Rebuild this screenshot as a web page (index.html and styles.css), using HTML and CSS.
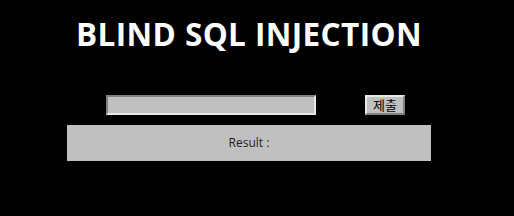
FILE: index.html
```html
<!DOCTYPE html>
<html lang="ko">
<head>
<meta charset="utf-8">
<title>Blind SQL Injection</title>
<link rel="stylesheet" href="styles.css">
</head>
<body>
<div class="page">
  <h1 class="title">BLIND SQL INJECTION</h1>
  <form class="row">
    <input class="field" type="text" name="q">
    <button class="submit" type="button">제출</button>
  </form>
  <div class="result">Result :</div>
</div>
</body>
</html>
```

FILE: styles.css
```css
html, body {
  margin: 0;
  padding: 0;
  background: #000;
}
.page {
  width: 498px;
  display: flex;
  flex-direction: column;
  font-family: "Open Sans", "Noto Sans CJK KR", sans-serif;
}
.title {
  margin: 14px 0 0 0;
  align-self: center;
  font-size: 31.5px;
  line-height: 40px;
  font-weight: 700;
  color: #fff;
  letter-spacing: 0.4px;
}
.row {
  display: flex;
  align-items: center;
  margin: 41px 0 0 0;
  padding-left: 106px;
  gap: 49px;
}
.field {
  box-sizing: border-box;
  width: 210px;
  height: 20px;
  margin: 0;
  padding: 0;
  background: #c0c0c0;
  border: 2px solid;
  border-color: #808080 #e8e8e8 #e8e8e8 #808080;
}
.submit {
  box-sizing: border-box;
  width: 40px;
  height: 20px;
  margin: 0;
  padding: 0;
  background: #c0c0c0;
  border: 2px solid;
  border-color: #e8e8e8 #808080 #808080 #e8e8e8;
  font-family: "Noto Sans CJK KR", sans-serif;
  font-size: 13px;
  line-height: 14px;
  color: #000;
}
.result {
  align-self: center;
  width: 364px;
  height: 36px;
  margin-top: 10px;
  background: #c0c0c0;
  color: #222;
  font-size: 12px;
  line-height: 36px;
  text-align: center;
}
```
